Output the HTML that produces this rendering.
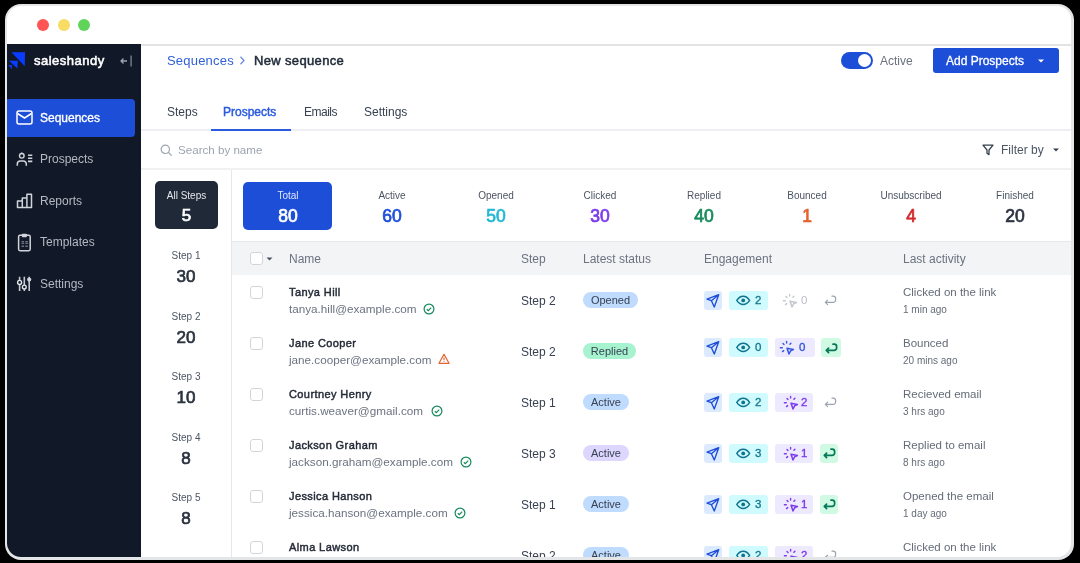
<!DOCTYPE html>
<html><head><meta charset="utf-8">
<style>
*{margin:0;padding:0;box-sizing:border-box}
html,body{width:1080px;height:563px;overflow:hidden;background:#000}
body{font-family:"Liberation Sans",sans-serif;position:relative}
.frame{position:absolute;left:5px;top:4px;width:1069px;height:556px;background:#e4e5e7;border-radius:16px}
.clip{position:absolute;left:0;top:0;width:1080px;height:563px;clip-path:inset(6px 9px 6px 7px round 14px);background:#fff}
.a{position:absolute;white-space:nowrap;line-height:1;will-change:transform}
.dot{position:absolute;width:12px;height:12px;border-radius:50%;top:19px}
.side{position:absolute;left:7px;top:44px;width:134px;height:520px;background:#111827}
.ln{position:absolute;background:#e5e7eb}
.nav{color:#b4b9c2;font-size:12px}
.pill{will-change:transform;position:absolute;height:16px;border-radius:8px;font-size:11px;line-height:16px;text-align:center;color:#374151}
.cb{position:absolute;width:13px;height:13px;border:1px solid #d1d5db;border-radius:3px;background:#fff}
.eb{position:absolute;height:19px;border-radius:3px}
.lbl{will-change:transform;position:absolute;font-size:10px;line-height:1;color:#4b5563;text-align:center;width:104px}
.num{will-change:transform;position:absolute;font-size:17.5px;font-weight:normal;-webkit-text-stroke:0.7px currentColor;line-height:1;text-align:center;width:104px}
</style></head><body>
<div class="frame"></div>
<div class="clip">
  <div class="dot" style="left:37px;background:#fe5454"></div>
  <div class="dot" style="left:58px;background:#f8dc63"></div>
  <div class="dot" style="left:78px;background:#60d35b"></div>
  <div class="ln" style="left:7px;top:44px;width:1066px;height:2px;background:#e3e3e4"></div>

  <!-- sidebar -->
  <div class="side"></div>
  <svg class="a" style="left:8px;top:51px" width="18" height="19" viewBox="0 0 18 19">
    <polygon points="3.4,1.3 17,1.3 16.8,15.3" fill="#0a3cff"/>
    <polygon points="1,9.8 9.8,9.8 9.4,17.5" fill="#0a3cff"/>
    <polygon points="0.4,14 3.8,14 3.8,18.3" fill="#0a3cff"/>
  </svg>
  <div class="a" style="left:34px;top:54px;font-size:13px;-webkit-text-stroke:0.55px #fff;letter-spacing:0.5px;color:#fff">saleshandy</div>
  <svg class="a" style="left:118px;top:54px" width="16" height="14" viewBox="0 0 16 14">
    <path d="M9 7H3M5.5 4.5L3 7l2.5 2.5" stroke="#9ca3af" stroke-width="1.3" fill="none"/>
    <rect x="12.3" y="1.5" width="1.6" height="11" fill="#6b7280"/>
  </svg>
  <div class="a" style="left:7px;top:99px;width:128px;height:38px;background:#1d4ed8;border-radius:0 4px 4px 0"></div>
  <svg class="a" style="left:16px;top:110px" width="17" height="15" viewBox="0 0 17 15">
    <rect x="1" y="1" width="15" height="13" rx="2" stroke="#fff" stroke-width="1.5" fill="none"/>
    <path d="M1.5 3.5L8.5 8l7-4.5" stroke="#fff" stroke-width="1.5" fill="none"/>
  </svg>
  <div class="a nav" style="left:40px;top:112px;color:#fff;-webkit-text-stroke:0.35px #fff">Sequences</div>
  <svg class="a" style="left:14px;top:150px" width="20" height="18" viewBox="0 0 20 18">
    <circle cx="7.8" cy="5.8" r="2.3" stroke="#d1d5db" stroke-width="1.4" fill="none"/>
    <path d="M7.8 2.3v1" stroke="#d1d5db" stroke-width="1"/>
    <path d="M3.3 15.8v-1.8a3 3 0 0 1 3-3h3a3 3 0 0 1 3 3v1.8" stroke="#d1d5db" stroke-width="1.5" fill="none"/>
    <path d="M14 5.2h4.3M14 8.3h4.3M14 11.4h4.3" stroke="#d1d5db" stroke-width="1.6"/>
  </svg>
  <div class="a nav" style="left:40px;top:153px">Prospects</div>
  <svg class="a" style="left:14px;top:190px" width="20" height="20" viewBox="0 0 20 20">
    <path d="M3.5 17.5V11h4.8v6.5zM8.3 17.5V8h4.6v9.5zM12.9 17.5V4.2h4.6v13.3z" stroke="#d1d5db" stroke-width="1.5" fill="none" stroke-linejoin="round"/>
  </svg>
  <div class="a nav" style="left:40px;top:195px">Reports</div>
  <svg class="a" style="left:14px;top:231px" width="20" height="22" viewBox="0 0 20 22">
    <rect x="4.6" y="4.3" width="11.6" height="15.4" rx="1.4" stroke="#d1d5db" stroke-width="1.5" fill="none"/>
    <path d="M7.6 4.6v-0.6a1.2 1.2 0 0 1 1.2-1.2h3.2a1.2 1.2 0 0 1 1.2 1.2v0.6l-0.7 1.7h-4.2z" fill="#d1d5db"/>
    <path d="M7.5 10.6h2.6M11.3 10.6h2.6M7.5 12.4h2.6M11.3 12.4h2.6M7.5 15.3h2.6M11.3 15.3h2.6" stroke="#6b7280" stroke-width="1.4"/>
  </svg>
  <div class="a nav" style="left:40px;top:236px">Templates</div>
  <svg class="a" style="left:14px;top:273px" width="20" height="22" viewBox="0 0 20 22">
    <path d="M5.6 3.8v14.2M10.3 3.8v14.2M15.2 3.8v14.2" stroke="#c4c8d0" stroke-width="1.6"/>
    <circle cx="5.6" cy="9.4" r="2" stroke="#e5e7eb" stroke-width="1.4" fill="#111827"/>
    <circle cx="10.3" cy="14" r="1.9" stroke="#e5e7eb" stroke-width="1.4" fill="#111827"/>
    <circle cx="15.2" cy="6.6" r="2.1" fill="#d1d5db"/>
  </svg>
  <div class="a nav" style="left:40px;top:278px">Settings</div>

  <!-- header -->
  <div class="a" style="left:167px;top:54px;font-size:13px;letter-spacing:0.2px;color:#2f5fd8">Sequences</div>
  <svg class="a" style="left:238px;top:55px" width="8" height="11" viewBox="0 0 8 11"><path d="M2.5 1.8l3.5 3.7-3.5 3.7" stroke="#6b8de0" stroke-width="1.3" fill="none"/></svg>
  <div class="a" style="left:254px;top:54px;font-size:13px;-webkit-text-stroke:0.5px #1f2937;letter-spacing:0.35px;color:#1f2937">New sequence</div>
  <div class="a" style="left:841px;top:52px;width:32px;height:17px;border-radius:9px;background:#1d4ed8"></div>
  <div class="a" style="left:858px;top:54px;width:13px;height:13px;border-radius:50%;background:#fff"></div>
  <div class="a" style="left:880px;top:55px;font-size:12px;color:#6b7280">Active</div>
  <div class="a" style="left:933px;top:48px;width:126px;height:25px;border-radius:3px;background:#1d4ed8"></div>
  <div class="a" style="left:946px;top:55px;font-size:12px;-webkit-text-stroke:0.3px #fff;color:#fff">Add Prospects</div>
  <svg class="a" style="left:1037px;top:59px" width="8" height="5" viewBox="0 0 8 5"><path d="M1 0.6h6L4 3.6z" fill="#fff"/></svg>

  <!-- tabs -->
  <div class="a" style="left:167px;top:106px;font-size:12px;color:#374151">Steps</div>
  <div class="a" style="left:223px;top:106px;font-size:12px;-webkit-text-stroke:0.45px #2a5bde;color:#2a5bde">Prospects</div>
  <div class="a" style="left:304px;top:106px;font-size:12px;letter-spacing:-0.5px;color:#374151">Emails</div>
  <div class="a" style="left:364px;top:106px;font-size:12px;color:#374151">Settings</div>
  <div class="ln" style="left:141px;top:129px;width:932px;height:2px;background:#eeeff2"></div>
  <div class="a" style="left:211px;top:129px;width:80px;height:2px;background:#2a5bde"></div>

  <!-- search -->
  <svg class="a" style="left:160px;top:144px" width="13" height="13" viewBox="0 0 13 13">
    <circle cx="5.3" cy="5.3" r="4.2" stroke="#9ca3af" stroke-width="1.2" fill="none"/>
    <path d="M8.4 8.4L11.6 11.6" stroke="#9ca3af" stroke-width="1.3"/>
  </svg>
  <div class="a" style="left:178px;top:144px;font-size:11.6px;color:#9ca3af">Search by name</div>
  <svg class="a" style="left:982px;top:144px" width="12" height="12" viewBox="0 0 12 12">
    <path d="M1 1.2h10L7 6v4.6L5 9.2V6z" stroke="#374151" stroke-width="1.3" fill="none" stroke-linejoin="round"/>
  </svg>
  <div class="a" style="left:1001px;top:144px;font-size:12px;color:#4b5563">Filter by</div>
  <svg class="a" style="left:1052px;top:148px" width="8" height="5" viewBox="0 0 8 5"><path d="M1 0.6h6L4 3.6z" fill="#374151"/></svg>
  <div class="ln" style="left:141px;top:168px;width:932px;height:2px;background:#f0f1f3"></div>

  <!-- steps column -->
  <div class="ln" style="left:231px;top:170px;width:1px;height:400px"></div>
  <div class="a" style="left:155px;top:181px;width:63px;height:48px;border-radius:5px;background:#1f2937"></div>
  <div class="a" style="left:155px;top:191px;width:63px;text-align:center;font-size:10px;color:#e5e7eb">All Steps</div>
  <div class="a" style="left:155px;top:207px;width:63px;text-align:center;font-size:17px;-webkit-text-stroke:0.7px #fff;color:#fff">5</div>

  <div class="a" style="left:141px;top:251px;width:90px;text-align:center;font-size:10px;color:#4b5563">Step 1</div>
<div class="a" style="left:141px;top:268px;width:90px;text-align:center;font-size:17px;-webkit-text-stroke:0.7px #2b3340;color:#2b3340">30</div>
<div class="a" style="left:141px;top:312px;width:90px;text-align:center;font-size:10px;color:#4b5563">Step 2</div>
<div class="a" style="left:141px;top:329px;width:90px;text-align:center;font-size:17px;-webkit-text-stroke:0.7px #2b3340;color:#2b3340">20</div>
<div class="a" style="left:141px;top:372px;width:90px;text-align:center;font-size:10px;color:#4b5563">Step 3</div>
<div class="a" style="left:141px;top:389px;width:90px;text-align:center;font-size:17px;-webkit-text-stroke:0.7px #2b3340;color:#2b3340">10</div>
<div class="a" style="left:141px;top:433px;width:90px;text-align:center;font-size:10px;color:#4b5563">Step 4</div>
<div class="a" style="left:141px;top:450px;width:90px;text-align:center;font-size:17px;-webkit-text-stroke:0.7px #2b3340;color:#2b3340">8</div>
<div class="a" style="left:141px;top:493px;width:90px;text-align:center;font-size:10px;color:#4b5563">Step 5</div>
<div class="a" style="left:141px;top:510px;width:90px;text-align:center;font-size:17px;-webkit-text-stroke:0.7px #2b3340;color:#2b3340">8</div>

  <!-- stats -->
  <div class="a" style="left:243px;top:182px;width:89px;height:48px;border-radius:5px;background:#1d4ed8"></div>
  <div class="lbl" style="left:236px;top:191px;color:#e0e7ff">Total</div>
<div class="num" style="left:236px;top:208px;color:#fff">80</div>
<div class="lbl" style="left:340px;top:191px;color:#4b5563">Active</div>
<div class="num" style="left:340px;top:208px;color:#1d4ed8">60</div>
<div class="lbl" style="left:444px;top:191px;color:#4b5563">Opened</div>
<div class="num" style="left:444px;top:208px;color:#22b8d6">50</div>
<div class="lbl" style="left:548px;top:191px;color:#4b5563">Clicked</div>
<div class="num" style="left:548px;top:208px;color:#7c3aed">30</div>
<div class="lbl" style="left:652px;top:191px;color:#4b5563">Replied</div>
<div class="num" style="left:652px;top:208px;color:#168a5c">40</div>
<div class="lbl" style="left:755px;top:191px;color:#4b5563">Bounced</div>
<div class="num" style="left:755px;top:208px;color:#e4622e">1</div>
<div class="lbl" style="left:859px;top:191px;color:#4b5563">Unsubscribed</div>
<div class="num" style="left:859px;top:208px;color:#d42a2a">4</div>
<div class="lbl" style="left:963px;top:191px;color:#4b5563">Finished</div>
<div class="num" style="left:963px;top:208px;color:#2b3340">20</div>

  <!-- table header -->
  <div class="a" style="left:232px;top:241px;width:841px;height:34px;background:#f3f4f6;border-top:1px solid #e6e8eb"></div>
  <div class="cb" style="left:250px;top:252px"></div>
  <svg class="a" style="left:266px;top:257px" width="7" height="4" viewBox="0 0 7 4"><path d="M0.5 0.5h6L3.5 3.5z" fill="#4b5563"/></svg>
  <div class="a" style="left:289px;top:253px;font-size:12px;color:#6b7280">Name</div>
  <div class="a" style="left:521px;top:253px;font-size:12px;color:#6b7280">Step</div>
  <div class="a" style="left:583px;top:253px;font-size:12px;color:#6b7280">Latest status</div>
  <div class="a" style="left:704px;top:253px;font-size:12px;color:#6b7280">Engagement</div>
  <div class="a" style="left:903px;top:253px;font-size:12px;color:#6b7280">Last activity</div>

  <div class="cb" style="left:250px;top:286px"></div>
<div class="a" style="left:289px;top:287px;font-size:11px;-webkit-text-stroke:0.45px #252c38;letter-spacing:0.4px;color:#252c38">Tanya Hill</div>
<div class="a" style="left:289px;top:303px;font-size:11.7px;color:#6b7280">tanya.hill@example.com</div>
<svg class="a" style="left:423px;top:303px" width="12" height="12" viewBox="0 0 12 12"><circle cx="6" cy="6" r="4.9" stroke="#168a5c" stroke-width="1.2" fill="none"/><path d="M3.8 6.2l1.5 1.4 2.9-2.9" stroke="#168a5c" stroke-width="1.2" fill="none"/></svg>
<div class="a" style="left:521px;top:295px;font-size:12px;color:#374151">Step 2</div>
<div class="pill" style="left:583px;top:292px;width:55px;background:#bfdbfe">Opened</div>
<div class="eb" style="left:704px;top:290.5px;width:18px;background:#dbeafe"></div>
<svg class="a" style="left:704px;top:290.5px" width="18" height="19" viewBox="0 0 18 19"><path d="M14.7 3.7L3 8.1l4.4 1.6 2.9 6.3z M14.7 3.7L7.4 9.7" stroke="#1d4ed8" stroke-width="1.35" fill="none" stroke-linejoin="round"/></svg>
<div class="eb" style="left:729px;top:290.5px;width:39px;background:#cffafe"></div>
<svg class="a" style="left:736px;top:290.5px" width="18" height="19" viewBox="0 0 18 19"><path d="M0.8 9.4C2.6 6.6 4.6 5.3 7.2 5.3s4.6 1.3 6.4 4.1C11.8 12.2 9.8 13.5 7.2 13.5S2.6 12.2 0.8 9.4z" stroke="#0e7490" stroke-width="1.4" fill="none"/><circle cx="7.2" cy="9.4" r="1.9" fill="#0e7490"/></svg>
<div class="a" style="left:755px;top:294.5px;font-size:11.5px;-webkit-text-stroke:0.35px #157a91;color:#157a91">2</div>
<svg class="a" style="left:777px;top:290.5px" width="22" height="19" viewBox="0 0 22 19"><path d="M13 10.2L19.4 11.6 16.6 12.8 15 16z" fill="none" stroke="#c4c8cf" stroke-width="1.5" stroke-linejoin="round"/><path d="M12.6 3.4v1.7M9 5.6l1 1M16.9 5.3l-1 1M6.4 9.7h1.9M8.5 13.6l1.2-1" stroke="#c4c8cf" stroke-width="1.4" stroke-linecap="round"/></svg>
<div class="a" style="left:801px;top:294.5px;font-size:11.5px;color:#b8bcc4">0</div>
<svg class="a" style="left:824px;top:294px" width="14" height="12" viewBox="0 0 14 12"><path d="M3.6 6.1L1.3 8.4l2.3 2.3M1.6 8.4h7.6a2.4 2.4 0 0 0 2.4-2.4V4.6a2.4 2.4 0 0 0-2.4-2.4H8" stroke="#9ca3af" stroke-width="1.2" fill="none" stroke-linejoin="round" stroke-linecap="round"/></svg>
<div class="a" style="left:903px;top:287px;font-size:11.5px;color:#656c78">Clicked on the link</div>
<div class="a" style="left:903px;top:305px;font-size:10px;color:#656c78">1 min ago</div>
<div class="ln" style="left:232px;top:325px;width:841px;height:1px;background:#fff"></div>
<div class="cb" style="left:250px;top:337px"></div>
<div class="a" style="left:289px;top:338px;font-size:11px;-webkit-text-stroke:0.45px #252c38;letter-spacing:0.4px;color:#252c38">Jane Cooper</div>
<div class="a" style="left:289px;top:354px;font-size:11.7px;color:#6b7280">jane.cooper@example.com</div>
<svg class="a" style="left:438px;top:353px" width="12" height="12" viewBox="0 0 12 12"><path d="M6 1.3L11 10.3H1z" stroke="#e4622e" stroke-width="1.2" fill="none" stroke-linejoin="round"/><path d="M6 4.6v2.6M6 8.3v.6" stroke="#e4622e" stroke-width="1.1"/></svg>
<div class="a" style="left:521px;top:346px;font-size:12px;color:#374151">Step 2</div>
<div class="pill" style="left:583px;top:343px;width:53px;background:#a7f3d0">Replied</div>
<div class="eb" style="left:704px;top:338.0px;width:18px;background:#dbeafe"></div>
<svg class="a" style="left:704px;top:338.0px" width="18" height="19" viewBox="0 0 18 19"><path d="M14.7 3.7L3 8.1l4.4 1.6 2.9 6.3z M14.7 3.7L7.4 9.7" stroke="#1d4ed8" stroke-width="1.35" fill="none" stroke-linejoin="round"/></svg>
<div class="eb" style="left:729px;top:338.0px;width:39px;background:#cffafe"></div>
<svg class="a" style="left:736px;top:338.0px" width="18" height="19" viewBox="0 0 18 19"><path d="M0.8 9.4C2.6 6.6 4.6 5.3 7.2 5.3s4.6 1.3 6.4 4.1C11.8 12.2 9.8 13.5 7.2 13.5S2.6 12.2 0.8 9.4z" stroke="#0e7490" stroke-width="1.4" fill="none"/><circle cx="7.2" cy="9.4" r="1.9" fill="#0e7490"/></svg>
<div class="a" style="left:755px;top:342.0px;font-size:11.5px;-webkit-text-stroke:0.35px #157a91;color:#157a91">0</div>
<div class="eb" style="left:775px;top:338.0px;width:40px;background:#ede9fe"></div>
<svg class="a" style="left:774px;top:338.0px" width="22" height="19" viewBox="0 0 22 19"><path d="M13 10.2L19.4 11.6 16.6 12.8 15 16z" fill="none" stroke="#3557e0" stroke-width="1.5" stroke-linejoin="round"/><path d="M12.6 3.4v1.7M9 5.6l1 1M16.9 5.3l-1 1M6.4 9.7h1.9M8.5 13.6l1.2-1" stroke="#3557e0" stroke-width="1.4" stroke-linecap="round"/></svg>
<div class="a" style="left:798.5px;top:342.0px;font-size:11.5px;-webkit-text-stroke:0.35px #3557e0;color:#3557e0">0</div>
<div class="eb" style="left:821px;top:338.0px;width:20px;background:#d1fae5"></div>
<svg class="a" style="left:825px;top:341.5px" width="14" height="12" viewBox="0 0 14 12"><path d="M3.6 6.1L1.3 8.4l2.3 2.3M1.6 8.4h7.6a2.4 2.4 0 0 0 2.4-2.4V4.6a2.4 2.4 0 0 0-2.4-2.4H8" stroke="#047857" stroke-width="1.7" fill="none" stroke-linejoin="round" stroke-linecap="round"/></svg>
<div class="a" style="left:903px;top:338px;font-size:11.5px;color:#656c78">Bounced</div>
<div class="a" style="left:903px;top:356px;font-size:10px;color:#656c78">20 mins ago</div>
<div class="ln" style="left:232px;top:376px;width:841px;height:1px;background:#fff"></div>
<div class="cb" style="left:250px;top:388px"></div>
<div class="a" style="left:289px;top:389px;font-size:11px;-webkit-text-stroke:0.45px #252c38;letter-spacing:0.4px;color:#252c38">Courtney Henry</div>
<div class="a" style="left:289px;top:405px;font-size:11.7px;color:#6b7280">curtis.weaver@gmail.com</div>
<svg class="a" style="left:431px;top:405px" width="12" height="12" viewBox="0 0 12 12"><circle cx="6" cy="6" r="4.9" stroke="#168a5c" stroke-width="1.2" fill="none"/><path d="M3.8 6.2l1.5 1.4 2.9-2.9" stroke="#168a5c" stroke-width="1.2" fill="none"/></svg>
<div class="a" style="left:521px;top:397px;font-size:12px;color:#374151">Step 1</div>
<div class="pill" style="left:583px;top:394px;width:46px;background:#bfdbfe">Active</div>
<div class="eb" style="left:704px;top:392.5px;width:18px;background:#dbeafe"></div>
<svg class="a" style="left:704px;top:392.5px" width="18" height="19" viewBox="0 0 18 19"><path d="M14.7 3.7L3 8.1l4.4 1.6 2.9 6.3z M14.7 3.7L7.4 9.7" stroke="#1d4ed8" stroke-width="1.35" fill="none" stroke-linejoin="round"/></svg>
<div class="eb" style="left:729px;top:392.5px;width:39px;background:#cffafe"></div>
<svg class="a" style="left:736px;top:392.5px" width="18" height="19" viewBox="0 0 18 19"><path d="M0.8 9.4C2.6 6.6 4.6 5.3 7.2 5.3s4.6 1.3 6.4 4.1C11.8 12.2 9.8 13.5 7.2 13.5S2.6 12.2 0.8 9.4z" stroke="#0e7490" stroke-width="1.4" fill="none"/><circle cx="7.2" cy="9.4" r="1.9" fill="#0e7490"/></svg>
<div class="a" style="left:755px;top:396.5px;font-size:11.5px;-webkit-text-stroke:0.35px #157a91;color:#157a91">2</div>
<div class="eb" style="left:775px;top:392.5px;width:38px;background:#ede9fe"></div>
<svg class="a" style="left:777.6px;top:392.5px" width="22" height="19" viewBox="0 0 22 19"><path d="M13 10.2L19.4 11.6 16.6 12.8 15 16z" fill="none" stroke="#7c3aed" stroke-width="1.5" stroke-linejoin="round"/><path d="M12.6 3.4v1.7M9 5.6l1 1M16.9 5.3l-1 1M6.4 9.7h1.9M8.5 13.6l1.2-1" stroke="#7c3aed" stroke-width="1.4" stroke-linecap="round"/></svg>
<div class="a" style="left:800.5px;top:396.5px;font-size:11.5px;-webkit-text-stroke:0.35px #7c3aed;color:#7c3aed">2</div>
<svg class="a" style="left:824px;top:396px" width="14" height="12" viewBox="0 0 14 12"><path d="M3.6 6.1L1.3 8.4l2.3 2.3M1.6 8.4h7.6a2.4 2.4 0 0 0 2.4-2.4V4.6a2.4 2.4 0 0 0-2.4-2.4H8" stroke="#9ca3af" stroke-width="1.2" fill="none" stroke-linejoin="round" stroke-linecap="round"/></svg>
<div class="a" style="left:903px;top:389px;font-size:11.5px;color:#656c78">Recieved email</div>
<div class="a" style="left:903px;top:407px;font-size:10px;color:#656c78">3 hrs ago</div>
<div class="ln" style="left:232px;top:427px;width:841px;height:1px;background:#fff"></div>
<div class="cb" style="left:250px;top:439px"></div>
<div class="a" style="left:289px;top:440px;font-size:11px;-webkit-text-stroke:0.45px #252c38;letter-spacing:0.4px;color:#252c38">Jackson Graham</div>
<div class="a" style="left:289px;top:456px;font-size:11.7px;color:#6b7280">jackson.graham@example.com</div>
<svg class="a" style="left:460px;top:456px" width="12" height="12" viewBox="0 0 12 12"><circle cx="6" cy="6" r="4.9" stroke="#168a5c" stroke-width="1.2" fill="none"/><path d="M3.8 6.2l1.5 1.4 2.9-2.9" stroke="#168a5c" stroke-width="1.2" fill="none"/></svg>
<div class="a" style="left:521px;top:448px;font-size:12px;color:#374151">Step 3</div>
<div class="pill" style="left:583px;top:445px;width:46px;background:#ddd6fe">Active</div>
<div class="eb" style="left:704px;top:443.5px;width:18px;background:#dbeafe"></div>
<svg class="a" style="left:704px;top:443.5px" width="18" height="19" viewBox="0 0 18 19"><path d="M14.7 3.7L3 8.1l4.4 1.6 2.9 6.3z M14.7 3.7L7.4 9.7" stroke="#1d4ed8" stroke-width="1.35" fill="none" stroke-linejoin="round"/></svg>
<div class="eb" style="left:729px;top:443.5px;width:39px;background:#cffafe"></div>
<svg class="a" style="left:736px;top:443.5px" width="18" height="19" viewBox="0 0 18 19"><path d="M0.8 9.4C2.6 6.6 4.6 5.3 7.2 5.3s4.6 1.3 6.4 4.1C11.8 12.2 9.8 13.5 7.2 13.5S2.6 12.2 0.8 9.4z" stroke="#0e7490" stroke-width="1.4" fill="none"/><circle cx="7.2" cy="9.4" r="1.9" fill="#0e7490"/></svg>
<div class="a" style="left:755px;top:447.5px;font-size:11.5px;-webkit-text-stroke:0.35px #157a91;color:#157a91">3</div>
<div class="eb" style="left:775px;top:443.5px;width:38px;background:#ede9fe"></div>
<svg class="a" style="left:777.6px;top:443.5px" width="22" height="19" viewBox="0 0 22 19"><path d="M13 10.2L19.4 11.6 16.6 12.8 15 16z" fill="none" stroke="#7c3aed" stroke-width="1.5" stroke-linejoin="round"/><path d="M12.6 3.4v1.7M9 5.6l1 1M16.9 5.3l-1 1M6.4 9.7h1.9M8.5 13.6l1.2-1" stroke="#7c3aed" stroke-width="1.4" stroke-linecap="round"/></svg>
<div class="a" style="left:800.5px;top:447.5px;font-size:11.5px;-webkit-text-stroke:0.35px #7c3aed;color:#7c3aed">1</div>
<div class="eb" style="left:820px;top:443.5px;width:18px;background:#d1fae5"></div>
<svg class="a" style="left:822.7px;top:447px" width="14" height="12" viewBox="0 0 14 12"><path d="M3.6 6.1L1.3 8.4l2.3 2.3M1.6 8.4h7.6a2.4 2.4 0 0 0 2.4-2.4V4.6a2.4 2.4 0 0 0-2.4-2.4H8" stroke="#047857" stroke-width="1.7" fill="none" stroke-linejoin="round" stroke-linecap="round"/></svg>
<div class="a" style="left:903px;top:440px;font-size:11.5px;color:#656c78">Replied to email</div>
<div class="a" style="left:903px;top:458px;font-size:10px;color:#656c78">8 hrs ago</div>
<div class="ln" style="left:232px;top:478px;width:841px;height:1px;background:#fff"></div>
<div class="cb" style="left:250px;top:490px"></div>
<div class="a" style="left:289px;top:491px;font-size:11px;-webkit-text-stroke:0.45px #252c38;letter-spacing:0.4px;color:#252c38">Jessica Hanson</div>
<div class="a" style="left:289px;top:507px;font-size:11.7px;color:#6b7280">jessica.hanson@example.com</div>
<svg class="a" style="left:454px;top:507px" width="12" height="12" viewBox="0 0 12 12"><circle cx="6" cy="6" r="4.9" stroke="#168a5c" stroke-width="1.2" fill="none"/><path d="M3.8 6.2l1.5 1.4 2.9-2.9" stroke="#168a5c" stroke-width="1.2" fill="none"/></svg>
<div class="a" style="left:521px;top:499px;font-size:12px;color:#374151">Step 1</div>
<div class="pill" style="left:583px;top:496px;width:46px;background:#bfdbfe">Active</div>
<div class="eb" style="left:704px;top:494.5px;width:18px;background:#dbeafe"></div>
<svg class="a" style="left:704px;top:494.5px" width="18" height="19" viewBox="0 0 18 19"><path d="M14.7 3.7L3 8.1l4.4 1.6 2.9 6.3z M14.7 3.7L7.4 9.7" stroke="#1d4ed8" stroke-width="1.35" fill="none" stroke-linejoin="round"/></svg>
<div class="eb" style="left:729px;top:494.5px;width:39px;background:#cffafe"></div>
<svg class="a" style="left:736px;top:494.5px" width="18" height="19" viewBox="0 0 18 19"><path d="M0.8 9.4C2.6 6.6 4.6 5.3 7.2 5.3s4.6 1.3 6.4 4.1C11.8 12.2 9.8 13.5 7.2 13.5S2.6 12.2 0.8 9.4z" stroke="#0e7490" stroke-width="1.4" fill="none"/><circle cx="7.2" cy="9.4" r="1.9" fill="#0e7490"/></svg>
<div class="a" style="left:755px;top:498.5px;font-size:11.5px;-webkit-text-stroke:0.35px #157a91;color:#157a91">3</div>
<div class="eb" style="left:775px;top:494.5px;width:38px;background:#ede9fe"></div>
<svg class="a" style="left:777.6px;top:494.5px" width="22" height="19" viewBox="0 0 22 19"><path d="M13 10.2L19.4 11.6 16.6 12.8 15 16z" fill="none" stroke="#7c3aed" stroke-width="1.5" stroke-linejoin="round"/><path d="M12.6 3.4v1.7M9 5.6l1 1M16.9 5.3l-1 1M6.4 9.7h1.9M8.5 13.6l1.2-1" stroke="#7c3aed" stroke-width="1.4" stroke-linecap="round"/></svg>
<div class="a" style="left:800.5px;top:498.5px;font-size:11.5px;-webkit-text-stroke:0.35px #7c3aed;color:#7c3aed">1</div>
<div class="eb" style="left:820px;top:494.5px;width:18px;background:#d1fae5"></div>
<svg class="a" style="left:822.7px;top:498px" width="14" height="12" viewBox="0 0 14 12"><path d="M3.6 6.1L1.3 8.4l2.3 2.3M1.6 8.4h7.6a2.4 2.4 0 0 0 2.4-2.4V4.6a2.4 2.4 0 0 0-2.4-2.4H8" stroke="#047857" stroke-width="1.7" fill="none" stroke-linejoin="round" stroke-linecap="round"/></svg>
<div class="a" style="left:903px;top:491px;font-size:11.5px;color:#656c78">Opened the email</div>
<div class="a" style="left:903px;top:509px;font-size:10px;color:#656c78">1 day ago</div>
<div class="ln" style="left:232px;top:529px;width:841px;height:1px;background:#fff"></div>
<div class="cb" style="left:250px;top:541px"></div>
<div class="a" style="left:289px;top:542px;font-size:11px;-webkit-text-stroke:0.45px #252c38;letter-spacing:0.4px;color:#252c38">Alma Lawson</div>
<div class="a" style="left:289px;top:558px;font-size:11.7px;color:#6b7280">alma.lawson@example.com</div>
<svg class="a" style="left:439px;top:558px" width="12" height="12" viewBox="0 0 12 12"><circle cx="6" cy="6" r="4.9" stroke="#168a5c" stroke-width="1.2" fill="none"/><path d="M3.8 6.2l1.5 1.4 2.9-2.9" stroke="#168a5c" stroke-width="1.2" fill="none"/></svg>
<div class="a" style="left:521px;top:550px;font-size:12px;color:#374151">Step 2</div>
<div class="pill" style="left:583px;top:547px;width:46px;background:#bfdbfe">Active</div>
<div class="eb" style="left:704px;top:545.5px;width:18px;background:#dbeafe"></div>
<svg class="a" style="left:704px;top:545.5px" width="18" height="19" viewBox="0 0 18 19"><path d="M14.7 3.7L3 8.1l4.4 1.6 2.9 6.3z M14.7 3.7L7.4 9.7" stroke="#1d4ed8" stroke-width="1.35" fill="none" stroke-linejoin="round"/></svg>
<div class="eb" style="left:729px;top:545.5px;width:39px;background:#cffafe"></div>
<svg class="a" style="left:736px;top:545.5px" width="18" height="19" viewBox="0 0 18 19"><path d="M0.8 9.4C2.6 6.6 4.6 5.3 7.2 5.3s4.6 1.3 6.4 4.1C11.8 12.2 9.8 13.5 7.2 13.5S2.6 12.2 0.8 9.4z" stroke="#0e7490" stroke-width="1.4" fill="none"/><circle cx="7.2" cy="9.4" r="1.9" fill="#0e7490"/></svg>
<div class="a" style="left:755px;top:549.5px;font-size:11.5px;-webkit-text-stroke:0.35px #157a91;color:#157a91">2</div>
<div class="eb" style="left:775px;top:545.5px;width:38px;background:#ede9fe"></div>
<svg class="a" style="left:777.6px;top:545.5px" width="22" height="19" viewBox="0 0 22 19"><path d="M13 10.2L19.4 11.6 16.6 12.8 15 16z" fill="none" stroke="#7c3aed" stroke-width="1.5" stroke-linejoin="round"/><path d="M12.6 3.4v1.7M9 5.6l1 1M16.9 5.3l-1 1M6.4 9.7h1.9M8.5 13.6l1.2-1" stroke="#7c3aed" stroke-width="1.4" stroke-linecap="round"/></svg>
<div class="a" style="left:800.5px;top:549.5px;font-size:11.5px;-webkit-text-stroke:0.35px #7c3aed;color:#7c3aed">2</div>
<svg class="a" style="left:824px;top:549px" width="14" height="12" viewBox="0 0 14 12"><path d="M3.6 6.1L1.3 8.4l2.3 2.3M1.6 8.4h7.6a2.4 2.4 0 0 0 2.4-2.4V4.6a2.4 2.4 0 0 0-2.4-2.4H8" stroke="#9ca3af" stroke-width="1.2" fill="none" stroke-linejoin="round" stroke-linecap="round"/></svg>
<div class="a" style="left:903px;top:542px;font-size:11.5px;color:#656c78">Clicked on the link</div>
<div class="a" style="left:903px;top:560px;font-size:10px;color:#656c78">1 min ago</div>
</div>
</body></html>
